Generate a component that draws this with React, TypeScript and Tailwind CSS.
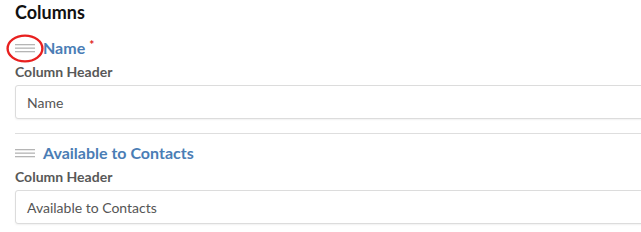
import React from "react";

function DragIcon() {
  return (
    <svg width="20" height="10" viewBox="0 0 20 10" className="shrink-0">
      <rect x="0" y="1" width="20" height="1.3" fill="#b5b5b5" />
      <rect x="0" y="4.5" width="20" height="1.3" fill="#b5b5b5" />
      <rect x="0" y="8" width="20" height="1.3" fill="#b5b5b5" />
    </svg>
  );
}

function Section({
  title,
  required,
  value,
  circled,
}: {
  title: string;
  required?: boolean;
  value: string;
  circled?: boolean;
}) {
  return (
    <div>
      <div className="relative flex h-[22px] items-center">
        <DragIcon />
        {circled && (
          <svg
            className="pointer-events-none absolute left-[-9px] top-[-3px]"
            width="38"
            height="29"
            viewBox="0 0 38 29"
          >
            <ellipse cx="19" cy="14.5" rx="17.4" ry="12.9" fill="none" stroke="#e8201f" strokeWidth="2.4" />
          </svg>
        )}
        <span className="ml-[8px] text-[16px] font-bold leading-[22px] text-[#4a7db5]">{title}</span>
        {required && <span className="relative top-[-3px] ml-[4px] text-[12px] font-bold text-[#e02020]">*</span>}
      </div>
      <div className="mt-[4px] h-[18px] text-[14px] font-bold leading-[18px] text-[#585858]">Column Header</div>
      <div className="mt-[4px] flex h-[34px] w-[640px] items-center rounded-[3px] border border-[#dcdcdc] bg-white pl-[11px] text-[14px] text-[#555] shadow-[0_1px_2px_rgba(0,0,0,0.06)]">
        {value}
      </div>
    </div>
  );
}

export default function App() {
  return (
    <div className="h-[232px] w-[641px] overflow-hidden bg-white pl-[15px]" style={{ fontFamily: "Lato, 'Open Sans', sans-serif" }}>
      <div className="h-[25px] text-[18px] font-bold leading-[25px] text-[#111]">Columns</div>
      <div className="mt-[12px]">
        <Section title="Name" required value="Name" circled />
      </div>
      <div className="mt-[14px] h-px w-[640px] bg-[#dedede]" />
      <div className="mt-[8px]">
        <Section title="Available to Contacts" value="Available to Contacts" />
      </div>
    </div>
  );
}
